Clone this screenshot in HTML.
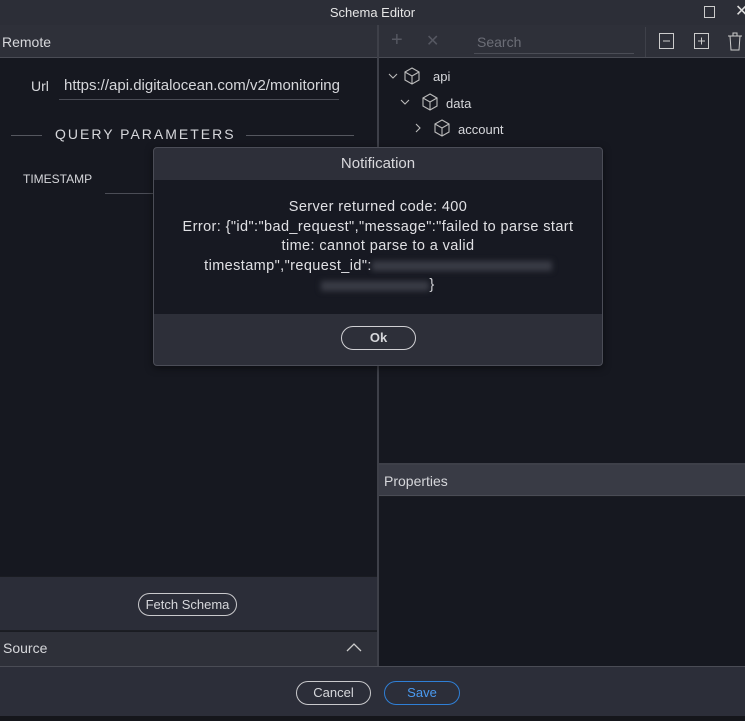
<!DOCTYPE html>
<html><head><style>
*{margin:0;padding:0;box-sizing:border-box}
body{width:745px;height:721px;background:#1a1c22;font-family:"Liberation Sans",sans-serif;color:#d6d7db;position:relative;overflow:hidden;font-size:13px}
.a{position:absolute}
</style></head><body>
<div class="a" style="left:0;top:0;width:745px;height:25px;background:#2c2e37"></div>
<div class="a" style="left:0;top:5px;width:745px;text-align:center;font-size:13px;color:#e6e6e6">Schema Editor</div>
<div class="a" style="left:704px;top:6px;width:11px;height:12px;border:1px solid #ccc"></div>
<div class="a" style="left:735px;top:1px;font-size:16px;color:#ddd">✕</div>

<div class="a" style="left:0;top:25px;width:377px;height:33px;background:#2e3039;border-bottom:1px solid #4a4c55"></div>
<div class="a" style="left:2px;top:34px;font-size:14px">Remote</div>
<div class="a" style="left:0;top:58px;width:377px;height:518px;background:#161820"></div>
<div class="a" style="left:31px;top:78px;font-size:14px">Url</div>
<div class="a" style="left:64px;top:77px;font-size:15px;width:276px;overflow:hidden;white-space:nowrap">https://api.digitalocean.com/v2/monitoring</div>
<div class="a" style="left:59px;top:99px;width:280px;height:1px;background:#4b4d56"></div>
<div class="a" style="left:11px;top:135px;width:31px;height:1px;background:#55575f"></div>
<div class="a" style="left:55px;top:126px;font-size:14px;letter-spacing:2px">QUERY PARAMETERS</div>
<div class="a" style="left:246px;top:135px;width:108px;height:1px;background:#55575f"></div>
<div class="a" style="left:23px;top:172px;font-size:12px">TIMESTAMP</div>
<div class="a" style="left:105px;top:193px;width:60px;height:1px;background:#4b4d56"></div>
<div class="a" style="left:0;top:577px;width:377px;height:54px;background:#2b2d38;border-bottom:1px solid #1c1e24"></div>
<div class="a" style="left:138px;top:593px;width:99px;height:23px;border:1px solid #c9c9cc;border-radius:12px;text-align:center;line-height:21px;font-size:13px">Fetch Schema</div>
<div class="a" style="left:0;top:632px;width:377px;height:34px;background:#2e3039"></div>
<div class="a" style="left:3px;top:640px;font-size:14px">Source</div>
<svg class="a" style="left:345px;top:641px" width="18" height="12"><path d="M2 10 L9 3 L16 10" stroke="#ccc" fill="none" stroke-width="1.3"/></svg>
<div class="a" style="left:377px;top:25px;width:2px;height:642px;background:#3e4049"></div>

<div class="a" style="left:379px;top:25px;width:366px;height:33px;background:#2e3039;border-bottom:1px solid #4a4c55"></div>
<div class="a" style="left:391px;top:29px;font-size:20px;color:#555761">+</div>
<div class="a" style="left:426px;top:31px;font-size:16px;color:#555761">✕</div>
<div class="a" style="left:477px;top:34px;font-size:14px;color:#6c6e77">Search</div>
<div class="a" style="left:474px;top:53px;width:160px;height:1px;background:#4b4d56"></div>
<div class="a" style="left:645px;top:27px;width:1px;height:30px;background:#3e4049"></div>
<svg class="a" style="left:658px;top:32px" width="90" height="20"><rect x="1.5" y="1.5" width="14" height="15" fill="none" stroke="#ccc"/><path d="M5 9h7" stroke="#ccc"/><rect x="36.5" y="1.5" width="14" height="15" fill="none" stroke="#ccc"/><path d="M40 9h7M43.5 5.5v7" stroke="#ccc"/><path d="M70 4h14M75 4V1h4v3M72 4l1 14h8l1-14" fill="none" stroke="#ccc"/></svg>
<div class="a" style="left:379px;top:58px;width:366px;height:405px;background:#161820"></div>
<svg class="a" style="left:385px;top:66px" width="150" height="76" fill="none" stroke="#bbb" stroke-width="1.1">
<path d="M4 8l4 4 4-4"/><path d="M27 2l7 4v8l-7 4-7-4V6z M20 6l7 4 7-4 M27 10v8"/>
<path d="M16 34l4 4 4-4"/><path d="M45 28l7 4v8l-7 4-7-4v-8z M38 32l7 4 7-4 M45 36v8"/>
<path d="M31 58l4 4-4 4"/><path d="M57 54l7 4v8l-7 4-7-4v-8z M50 58l7 4 7-4 M57 62v8"/>
</svg>
<div class="a" style="left:433px;top:69px;font-size:13px">api</div>
<div class="a" style="left:446px;top:96px;font-size:13px">data</div>
<div class="a" style="left:458px;top:122px;font-size:13px">account</div>
<div class="a" style="left:379px;top:463px;width:366px;height:2px;background:#3e4049"></div>
<div class="a" style="left:379px;top:465px;width:366px;height:31px;background:#393b45;border-bottom:1px solid #4a4c55"></div>
<div class="a" style="left:384px;top:473px;font-size:14px">Properties</div>
<div class="a" style="left:379px;top:497px;width:366px;height:169px;background:#161820"></div>

<div class="a" style="left:0;top:666px;width:745px;height:1px;background:#4a4c55"></div>
<div class="a" style="left:0;top:667px;width:745px;height:49px;background:#2c2e39"></div>
<div class="a" style="left:0;top:716px;width:745px;height:5px;background:#15161b"></div>
<div class="a" style="left:296px;top:681px;width:75px;height:24px;border:1px solid #c9c9cc;border-radius:12px;text-align:center;line-height:22px">Cancel</div>
<div class="a" style="left:384px;top:681px;width:76px;height:24px;border:1px solid #2f7fd6;border-radius:12px;text-align:center;line-height:22px;color:#4a9af0">Save</div>

<div class="a" style="left:153px;top:147px;width:450px;height:219px;border:1px solid #4b4d57;border-radius:4px;background:#2d2f39;overflow:hidden;box-shadow:0 2px 8px rgba(0,0,0,.5)">
 <div style="height:32px;line-height:31px;text-align:center;font-size:15px;color:#d8d8dc">Notification</div>
 <div style="height:134px;background:#171922;text-align:center;font-size:14.5px;letter-spacing:0.4px;line-height:19.6px;padding-top:18px;color:#e0e0e4;white-space:nowrap">Server returned code: 400<br>Error: {"id":"bad_request","message":"failed to parse start<br>time: cannot parse to a valid<br>timestamp","request_id":<span style="display:inline-block;width:180px;height:10px;background:#3a3c46;filter:blur(3px);vertical-align:middle"></span><br><span style="display:inline-block;width:108px;height:10px;background:#3a3c46;filter:blur(3px);vertical-align:middle"></span>}</div>
 <div class="a" style="left:187px;top:178px;width:75px;height:24px;border:1px solid #d0d0d4;border-radius:12px;text-align:center;line-height:22px;font-weight:bold;font-size:13px">Ok</div>
</div>
</body></html>
